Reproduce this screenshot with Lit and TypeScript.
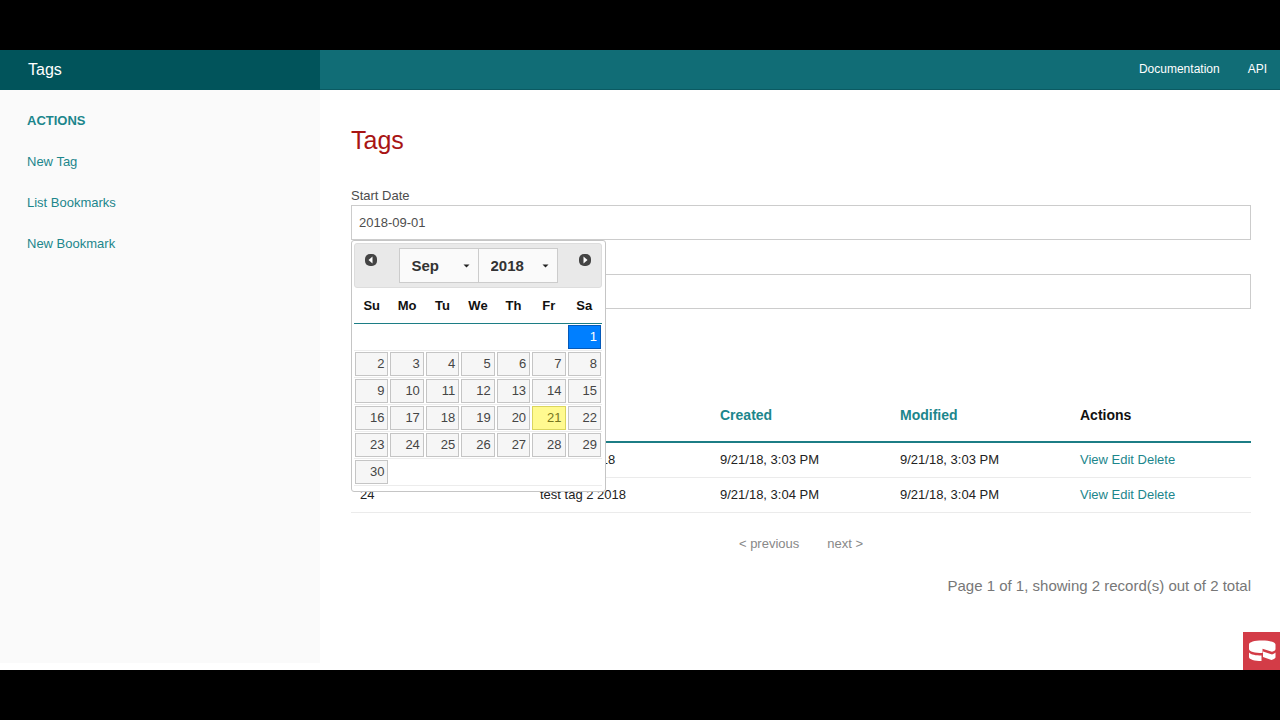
import { LitElement, html, css, nothing } from "lit";
import { customElement, property, state } from "lit/decorators.js";
import { classMap } from "lit/directives/class-map.js";

const MONTHS = ["Jan", "Feb", "Mar", "Apr", "May", "Jun", "Jul", "Aug", "Sep", "Oct", "Nov", "Dec"];
const WEEKDAYS = ["Su", "Mo", "Tu", "We", "Th", "Fr", "Sa"];
const YEARS = [2016, 2017, 2018, 2019, 2020];

interface TagRow {
  id: number;
  title: string;
  created: string;
  modified: string;
}

const ROWS: TagRow[] = [
  { id: 23, title: "test tag 2018", created: "9/21/18, 3:03 PM", modified: "9/21/18, 3:03 PM" },
  { id: 24, title: "test tag 2 2018", created: "9/21/18, 3:04 PM", modified: "9/21/18, 3:04 PM" },
];

@customElement("date-picker")
class DatePicker extends LitElement {
  @property({ type: Number }) month = 8;
  @property({ type: Number }) year = 2018;
  @property() value = "2018-09-01";
  @property() today = "2018-09-21";

  static styles = css`
    :host {
      display: block;
      box-sizing: border-box;
      width: 255px;
      padding: 2px 3px 5px 2px;
      border: 1px solid #c5c5c5;
      border-radius: 3px;
      background: #fff;
      color: #333;
      font-size: 13px;
    }
    .bar {
      display: flex;
      align-items: flex-start;
      justify-content: space-between;
      box-sizing: border-box;
      height: 45px;
      padding: 4px 9px;
      border: 1px solid #ddd;
      border-radius: 3px;
      background: #e9e9e9;
    }
    .step {
      width: 14px;
      height: 14px;
      margin-top: 5px;
      padding: 0;
      border: 0;
      background: none;
    }
    .step svg {
      display: block;
    }
    .pickers {
      display: flex;
    }
    .picker {
      display: grid;
      align-items: center;
      box-sizing: border-box;
      width: 80px;
      height: 35px;
      border: 1px solid #ccc;
      background: #fafafa;
    }
    .picker + .picker {
      margin-left: -1px;
    }
    .picker select,
    .picker svg {
      grid-area: 1 / 1;
    }
    .picker select {
      width: 100%;
      height: 33px;
      padding: 0 12px;
      border: 0;
      appearance: none;
      background: transparent;
      color: #333;
      font: bold 15px/20px "Liberation Sans", Arial, sans-serif;
    }
    .picker svg {
      justify-self: end;
      margin-right: 8px;
      pointer-events: none;
    }
    table {
      width: 100%;
      table-layout: fixed;
      border-collapse: separate;
      border-spacing: 0;
    }
    th {
      height: 35px;
      padding: 0;
      border-bottom: 1px solid #1c7d85;
      color: #111;
      font-weight: bold;
      text-align: center;
    }
    td {
      padding: 1px;
      border-bottom: 1px solid #ececec;
    }
    .day {
      display: block;
      box-sizing: border-box;
      width: 100%;
      height: 24px;
      padding: 0 3px;
      border: 1px solid #c5c5c5;
      background: #f6f6f6;
      color: #454545;
      font: 13px/20px "Liberation Sans", Arial, sans-serif;
      text-align: right;
    }
    .day.today {
      border-color: #dad55e;
      background: #fffa90;
      color: #777620;
    }
    .day.chosen {
      border-color: #0459b8;
      background: #007fff;
      color: #fff;
    }
  `;

  private iso(day: number) {
    return `${this.year}-${String(this.month + 1).padStart(2, "0")}-${String(day).padStart(2, "0")}`;
  }

  private weeks(): (number | null)[][] {
    const lead = new Date(this.year, this.month, 1).getDay();
    const count = new Date(this.year, this.month + 1, 0).getDate();
    const total = Math.ceil((lead + count) / 7);
    return Array.from({ length: total }, (_, w) =>
      WEEKDAYS.map((_, d) => {
        const n = w * 7 + d - lead + 1;
        return n >= 1 && n <= count ? n : null;
      }),
    );
  }

  private shift(by: number) {
    const d = new Date(this.year, this.month + by, 1);
    this.month = d.getMonth();
    this.year = d.getFullYear();
  }

  private choose(day: number) {
    this.dispatchEvent(new CustomEvent("pick", { detail: this.iso(day) }));
  }

  private caret() {
    return html`<svg width="7" height="4" viewBox="0 0 7 4" aria-hidden="true"><path d="M.5 .5h6L3.500 3.500z" fill="#222" /></svg>`;
  }

  render() {
    return html`
      <div class="bar">
        <button class="step" type="button" aria-label="Prev" @click=${() => this.shift(-1)}>
          <svg width="14" height="14" viewBox="0 0 14 14">
            <rect x="1" y="1" width="12" height="12" rx="5" fill="#444" />
            <path d="M8.500 3.500v7L4.500 7z" fill="#fff" />
          </svg>
        </button>
        <div class="pickers">
          <div class="picker">
            <select aria-label="Month" @change=${(e: Event) => (this.month = Number((e.target as HTMLSelectElement).value))}>
              ${MONTHS.map((m, i) => html`<option value=${i} ?selected=${i === this.month}>${m}</option>`)}
            </select>
            ${this.caret()}
          </div>
          <div class="picker">
            <select aria-label="Year" @change=${(e: Event) => (this.year = Number((e.target as HTMLSelectElement).value))}>
              ${YEARS.map((y) => html`<option value=${y} ?selected=${y === this.year}>${y}</option>`)}
            </select>
            ${this.caret()}
          </div>
        </div>
        <button class="step" type="button" aria-label="Next" @click=${() => this.shift(1)}>
          <svg width="14" height="14" viewBox="0 0 14 14">
            <rect x="1" y="1" width="12" height="12" rx="5" fill="#444" />
            <path d="M5.500 3.500v7L9.500 7z" fill="#fff" />
          </svg>
        </button>
      </div>
      <table>
        <thead>
          <tr>
            ${WEEKDAYS.map((d) => html`<th scope="col">${d}</th>`)}
          </tr>
        </thead>
        <tbody>
          ${this.weeks().map(
            (week) => html`<tr>
              ${week.map(
                (n) => html`<td>
                  ${n === null
                    ? nothing
                    : html`<button
                        type="button"
                        class=${classMap({
                          day: true,
                          today: this.iso(n) === this.today,
                          chosen: this.iso(n) === this.value,
                        })}
                        @click=${() => this.choose(n)}
                      >${n}</button>`}
                </td>`,
              )}
            </tr>`,
          )}
        </tbody>
      </table>
    `;
  }
}

@customElement("app-root")
class AppRoot extends LitElement {
  @state() private start = "2018-09-01";

  static styles = css`
    :host {
      display: flex;
      box-sizing: border-box;
      min-height: 100vh;
      padding: 50px 0;
      background: #000;
      color: #222;
      font: 13px/20px "Liberation Sans", Arial, sans-serif;
    }
    a {
      color: #1c868c;
      text-decoration: none;
    }
    .page {
      position: relative;
      display: flex;
      flex: 1;
      flex-direction: column;
      background: #fff;
    }
    .top {
      display: flex;
      height: 40px;
      background: #116d76;
      box-shadow: inset 0 -1px #0b5a62;
    }
    .name {
      display: flex;
      align-items: center;
      box-sizing: border-box;
      width: 25%;
      padding: 0 28px;
      background: #01545b;
      font-size: 16px;
    }
    .name a,
    .links a {
      color: #fff;
    }
    .links {
      display: flex;
      flex: 1;
      align-items: center;
      justify-content: flex-end;
      gap: 28px;
      padding: 0 13px 2px;
      font-size: 12px;
    }
    .body {
      display: flex;
      flex: 1;
    }
    .side {
      box-sizing: border-box;
      width: 25%;
      margin-bottom: 7px;
      padding: 21px 27px;
      background: #fafafa;
    }
    .side ul {
      display: flex;
      flex-direction: column;
      gap: 21px;
      margin: 0;
      padding: 0;
      list-style: none;
    }
    .heading {
      color: #1c868c;
      font-weight: bold;
      text-transform: uppercase;
    }
    .main {
      flex: 1;
      box-sizing: border-box;
      padding: 35px 29px 35px 31px;
    }
    h1 {
      margin: 0 0 31px;
      color: #a81414;
      font-size: 25px;
      font-weight: normal;
      line-height: 30px;
    }
    .fields {
      display: flex;
      flex-direction: column;
      gap: 15px;
      margin-bottom: 80px;
    }
    .field {
      position: relative;
    }
    .field label {
      display: block;
      height: 19px;
      color: #4d4d4d;
    }
    .field input {
      display: block;
      box-sizing: border-box;
      width: 100%;
      height: 35px;
      padding: 0 7px;
      border: 1px solid #ccc;
      background: #fff;
      color: #4d4d4d;
      font: inherit;
    }
    .popup {
      position: absolute;
      z-index: 1;
      top: 100%;
      left: 0;
    }
    .list {
      width: 100%;
      table-layout: fixed;
      border-collapse: separate;
      border-spacing: 0;
    }
    .list th {
      height: 20px;
      padding: 16px 9px;
      border-bottom: 2px solid #1c7d85;
      color: #111;
      font-size: 14px;
      text-align: left;
    }
    .list td {
      padding: 7px 9px;
      border-bottom: 1px solid #ebebeb;
    }
    .pager {
      display: flex;
      justify-content: center;
      gap: 28px;
      margin: 21px 0 22px;
    }
    .pager a {
      color: #888;
    }
    .summary {
      margin: 0;
      color: #777;
      font-size: 15px;
      text-align: right;
    }
    .badge {
      position: absolute;
      right: 0;
      bottom: 0;
      display: block;
      width: 37px;
      height: 38px;
    }
    .badge svg {
      display: block;
    }
  `;

  render() {
    return html`
      <div class="page">
        <nav class="top">
          <div class="name"><a href="#">Tags</a></div>
          <div class="links"><a href="#">Documentation</a><a href="#">API</a></div>
        </nav>
        <div class="body">
          <nav class="side">
            <ul>
              <li class="heading">Actions</li>
              <li><a href="#">New Tag</a></li>
              <li><a href="#">List Bookmarks</a></li>
              <li><a href="#">New Bookmark</a></li>
            </ul>
          </nav>
          <main class="main">
            <h1>Tags</h1>
            <form class="fields">
              <div class="field">
                <label for="start">Start Date</label>
                <input id="start" type="text" .value=${this.start} />
                <date-picker
                  class="popup"
                  .value=${this.start}
                  @pick=${(e: CustomEvent<string>) => (this.start = e.detail)}
                ></date-picker>
              </div>
              <div class="field">
                <label for="end">End Date</label>
                <input id="end" type="text" />
              </div>
            </form>
            <table class="list">
              <thead>
                <tr>
                  <th scope="col" aria-label="Id"></th>
                  <th scope="col" aria-label="Title"></th>
                  <th scope="col"><a href="#">Created</a></th>
                  <th scope="col"><a href="#">Modified</a></th>
                  <th scope="col">Actions</th>
                </tr>
              </thead>
              <tbody>
                ${ROWS.map(
                  (r) => html`<tr>
                    <td>${r.id}</td>
                    <td>${r.title}</td>
                    <td>${r.created}</td>
                    <td>${r.modified}</td>
                    <td><a href="#">View</a> <a href="#">Edit</a> <a href="#">Delete</a></td>
                  </tr>`,
                )}
              </tbody>
            </table>
            <div class="pager"><a href="#">&lt; previous</a><a href="#">next &gt;</a></div>
            <p class="summary">Page 1 of 1, showing 2 record(s) out of 2 total</p>
          </main>
        </div>
        <a class="badge" href="#" aria-label="Debug Kit">
          <svg width="37" height="38" viewBox="0 0 37 38">
            <rect width="37" height="38" fill="#d33c47" />
            <path
              d="M6 12.500C6 10 11.500 8.500 19 8.500S32.500 10 32.500 12.500v4.500c0 1.500-1.500 2.300-3.500 2.800l-9.500-3v4.200C12 21 6 19.800 6 17z"
              fill="#fff"
            />
            <path d="M6 20.500c2 2.300 7 3 12.500 3v5.500C11.500 29 6 27.500 6 25z" fill="#fff" />
            <path d="M20 19.500l9 3c1.700-.5 3-1.200 3.500-2v5c-.5 1.200-2.200 2-4 2.500L20 25z" fill="#fff" />
          </svg>
        </a>
      </div>
    `;
  }
}
